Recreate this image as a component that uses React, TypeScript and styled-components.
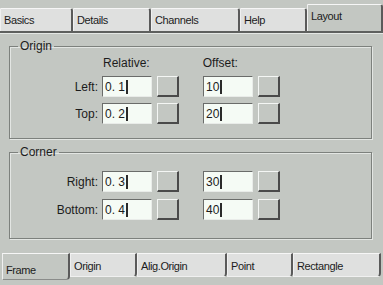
import styled, { createGlobalStyle } from "styled-components";

const Global = createGlobalStyle`
  html, body {
    margin: 0;
    padding: 0;
    background: #c3c7c2;
  }
  body {
    font-family: "Liberation Sans", Arial, sans-serif;
    color: #1c1c1c;
  }
`;

const Window = styled.div`
  width: 383px;
  height: 285px;
  background: #c3c7c2;
  display: flex;
  flex-direction: column;
  overflow: hidden;
`;

const TopBar = styled.div`
  display: flex;
  align-items: flex-end;
  height: 31px;
  border-bottom: 2px solid #5e605e;
`;

const TopTab = styled.div<{ $w: number; $active?: boolean }>`
  box-sizing: border-box;
  width: ${(p) => p.$w}px;
  height: ${(p) => (p.$active ? 27 : 23)}px;
  padding: 5px 0 0 3px;
  background: ${(p) => (p.$active ? "#c3c7c2" : "#dfe0df")};
  border-top: 1px solid #f6f6f6;
  border-left: 1px solid #f0f0f0;
  border-right: 2px solid #5a5a5a;
  border-top-right-radius: 3px;
  font-size: 11px;
  line-height: 13px;
  letter-spacing: -0.4px;
  white-space: nowrap;
`;

const Panel = styled.div`
  flex: 1;
  display: flex;
  flex-direction: column;
  padding: 0 11px 0 9px;
  border-top: 1px solid #e4e7e4;
`;

const Group = styled.fieldset<{ $top: number; $pb: number }>`
  margin: ${(p) => p.$top}px 0 0 0;
  padding: 0 0 ${(p) => p.$pb}px 0;
  border: 1px solid #7d817d;
  box-shadow: inset 1px 1px 0 #e3e6e3, 1px 1px 0 #e3e6e3;
  min-width: 0;
`;

const Legend = styled.legend`
  margin-left: 8px;
  padding: 0 2px;
  font-size: 12px;
  line-height: 14px;
`;

const Row = styled.div<{ $mt: number }>`
  display: flex;
  align-items: center;
  margin-top: ${(p) => p.$mt}px;
  height: 21px;
`;

const HeadRow = styled.div`
  display: flex;
  margin-top: 3px;
  height: 14px;
  font-size: 12px;
  line-height: 14px;
`;

const Label = styled.div`
  width: 88px;
  margin-right: 4px;
  text-align: right;
  font-size: 12px;
  line-height: 14px;
`;

const Head = styled.div<{ $ml: number }>`
  margin-left: ${(p) => p.$ml}px;
`;

const Field = styled.div<{ $ml?: number }>`
  box-sizing: border-box;
  width: 50px;
  height: 21px;
  margin-left: ${(p) => p.$ml ?? 0}px;
  padding: 3px 0 0 2px;
  background: #f5fbf5;
  border-top: 1px solid #6a6c6a;
  border-left: 1px solid #6a6c6a;
  border-right: 1px solid #e9ece9;
  border-bottom: 1px solid #e9ece9;
  font-size: 12px;
  line-height: 14px;
  display: flex;
  align-items: flex-start;
  white-space: pre;
`;

const Caret = styled.span`
  display: inline-block;
  width: 2px;
  height: 14px;
  margin-left: 1px;
  background: #2a2a2a;
`;

const Button = styled.div`
  box-sizing: border-box;
  width: 22px;
  height: 21px;
  margin-left: 5px;
  background: #c3c7c2;
  border-top: 1px solid #f4f6f4;
  border-left: 1px solid #f4f6f4;
  border-right: 2px solid #4a4a4a;
  border-bottom: 2px solid #4a4a4a;
`;

const BottomBar = styled.div`
  display: flex;
  align-items: flex-start;
  padding-left: 2px;
  height: 32px;
`;

const BottomTab = styled.div<{ $w: number; $active?: boolean }>`
  box-sizing: border-box;
  width: ${(p) => p.$w}px;
  height: ${(p) => (p.$active ? 27 : 24)}px;
  padding: ${(p) => (p.$active ? "10px" : "6px")} 0 0 3px;
  background: ${(p) => (p.$active ? "#c3c7c2" : "#dfe0df")};
  border-top: 1px solid #f6f6f6;
  border-left: 1px solid #f0f0f0;
  border-right: 2px solid #5a5a5a;
  border-bottom: 1px solid ${(p) => (p.$active ? "#8a8c8a" : "#f0f0f0")};
  border-bottom-right-radius: 4px;
  font-size: 11px;
  line-height: 13px;
  letter-spacing: -0.4px;
  white-space: nowrap;
`;

const topTabs = [
  { name: "Basics", w: 73 },
  { name: "Details", w: 78 },
  { name: "Channels", w: 89 },
  { name: "Help", w: 67 },
  { name: "Layout", w: 76, active: true },
];

const bottomTabs = [
  { name: "Frame", w: 68, active: true },
  { name: "Origin", w: 67 },
  { name: "Alig.Origin", w: 90 },
  { name: "Point", w: 66 },
  { name: "Rectangle", w: 88 },
];

type Line = { label: string; rel: string; off: string };

const EditRow = ({ line, mt }: { line: Line; mt: number }) => (
  <Row $mt={mt}>
    <Label>{line.label}</Label>
    <Field>
      {line.rel}
      <Caret />
    </Field>
    <Button />
    <Field $ml={24}>
      {line.off}
      <Caret />
    </Field>
    <Button />
  </Row>
);

export default function App() {
  return (
    <Window>
      <Global />
      <TopBar>
        {topTabs.map((t) => (
          <TopTab key={t.name} $w={t.w} $active={t.active}>
            {t.name}
          </TopTab>
        ))}
      </TopBar>
      <Panel>
        <Group $top={5} $pb={14}>
          <Legend>Origin</Legend>
          <HeadRow>
            <Head $ml={93}>Relative:</Head>
            <Head $ml={53}>Offset:</Head>
          </HeadRow>
          <EditRow mt={6} line={{ label: "Left:", rel: "0. 1", off: "10" }} />
          <EditRow mt={6} line={{ label: "Top:", rel: "0. 2", off: "20" }} />
        </Group>
        <Group $top={6} $pb={18}>
          <Legend>Corner</Legend>
          <EditRow mt={12} line={{ label: "Right:", rel: "0. 3", off: "30" }} />
          <EditRow mt={7} line={{ label: "Bottom:", rel: "0. 4", off: "40" }} />
        </Group>
      </Panel>
      <BottomBar>
        {bottomTabs.map((t) => (
          <BottomTab key={t.name} $w={t.w} $active={t.active}>
            {t.name}
          </BottomTab>
        ))}
      </BottomBar>
    </Window>
  );
}
